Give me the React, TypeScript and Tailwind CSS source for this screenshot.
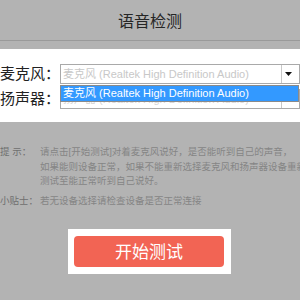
import React from "react";

const FONT = { fontFamily: '"Liberation Sans", "Noto Sans CJK SC", sans-serif' };

function Select({ text, ghost }: { text: string; ghost?: boolean }) {
  return (
    <div className="flex h-[20px] w-[245px] border border-[#a9a9a9] bg-white">
      <div className={`flex-1 overflow-hidden whitespace-nowrap pl-[2px] text-[11px] leading-[18px] ${ghost ? "text-[#d4d4d4]" : "text-[#c8c8c8]"}`}>
        {text}
      </div>
      <div className="flex w-[13px] items-center justify-center border-l border-[#c8c8c8] mr-[5px]">
        <svg width="7" height="4" viewBox="0 0 7 4">
          <path d="M0 0 L7 0 L3.5 4 Z" fill="#111" />
        </svg>
      </div>
    </div>
  );
}

export default function App() {
  return (
    <div className="relative h-[300px] w-[300px] overflow-hidden bg-[#b3b3b3]" style={FONT}>
      <div className="flex h-[41px] items-center justify-center border-b border-[#9a9a9a] pt-[3px] text-[16px] text-[#262626]">
        语音检测
      </div>
      <div className="h-[8px]" />
      <div className="relative h-[73px] bg-white pt-[15px]">
        <div className="flex h-[20px] items-center">
          <div className="w-[60px] whitespace-nowrap text-[15px] leading-[20px] text-[#222]">麦克风：</div>
          <Select text="麦克风 (Realtek High Definition Audio)" />
        </div>
        <div className="mt-[5px] flex h-[20px] items-center">
          <div className="w-[60px] whitespace-nowrap text-[15px] leading-[20px] text-[#222]">扬声器：</div>
          <Select text="扬声器 (Realtek High Definition Audio)" ghost />
        </div>
        <div className="absolute left-[60px] top-[36px] h-[17px] w-[239px] border border-[#8a8a8a] bg-white">
          <div className="h-[15px] bg-[#3399ff] pl-[2px] text-[11px] leading-[15px] text-white whitespace-nowrap">
            麦克风 (Realtek High Definition Audio)
          </div>
        </div>
      </div>
      <div className="overflow-hidden pt-[23px] text-[9.5px] leading-[14.5px] text-[#858585]">
        <div className="flex">
          <div className="w-[40px] shrink-0 whitespace-nowrap text-[#6f6f6f]">提&nbsp;示：</div>
          <div className="min-w-0 overflow-hidden whitespace-nowrap">
            <div>请点击[开始测试]对着麦克风说好，是否能听到自己的声音，</div>
            <div>如果能则设备正常，如果不能重新选择麦克风和扬声器设备重新</div>
            <div>测试至能正常听到自己说好。</div>
          </div>
        </div>
        <div className="mt-[5px] flex">
          <div className="w-[40px] shrink-0 whitespace-nowrap text-[#6f6f6f]">小贴士：</div>
          <div className="whitespace-nowrap">若无设备选择请检查设备是否正常连接</div>
        </div>
      </div>
      <div className="ml-[68px] mt-[21px] w-[163px] bg-white pb-[7px] pl-[6px] pt-[7px]">
        <div className="flex h-[31px] w-[150px] items-center justify-center rounded-[4px] bg-[#f26454] pt-[2px] text-[17px] text-white">
          开始测试
        </div>
      </div>
    </div>
  );
}
